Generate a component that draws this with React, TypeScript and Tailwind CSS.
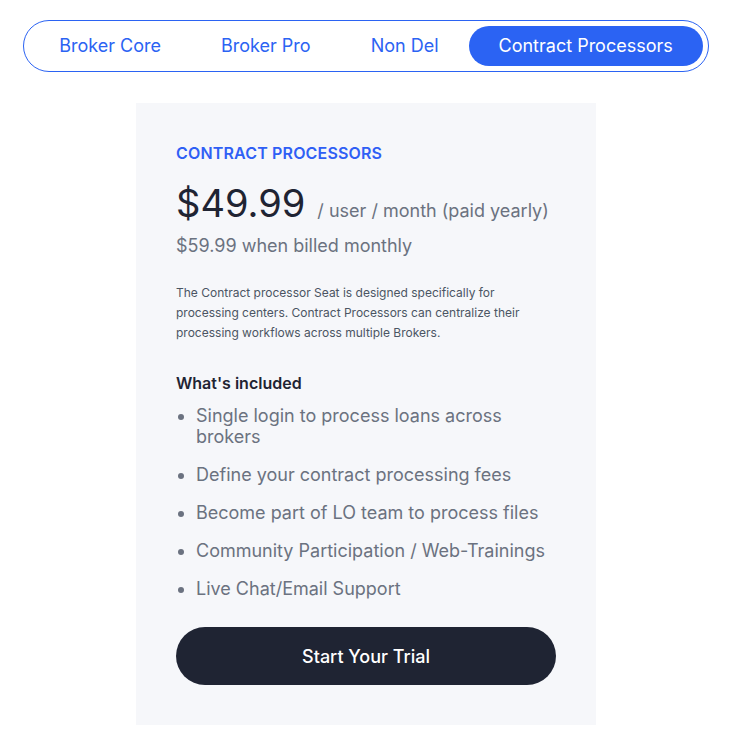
import { useState } from "react";

const tabs = ["Broker Core", "Broker Pro", "Non Del", "Contract Processors"];

const features = [
  "Single login to process loans across brokers",
  "Define your contract processing fees",
  "Become part of LO team to process files",
  "Community Participation / Web-Trainings",
  "Live Chat/Email Support",
];

export default function App() {
  const [active, setActive] = useState("Contract Processors");

  return (
    <div className="min-h-screen bg-white pr-[5px] pt-5 flex flex-col items-center font-['Inter',sans-serif]">
      {/* Plan tabs */}
      <div className="flex rounded-full border border-[#2b63f3] p-[5px]">
        {tabs.map((t) => (
          <button
            key={t}
            onClick={() => setActive(t)}
            className={
              active === t
                ? "h-10 px-[30px] rounded-full bg-[#2b63f3] text-white text-[18px] leading-none"
                : "h-10 px-[30px] rounded-full text-[#2b63f3] text-[18px] leading-none"
            }
          >
            {t}
          </button>
        ))}
      </div>

      {/* Card */}
      <div className="mt-[31px] w-[460px] bg-[#f6f7fa] px-10 pt-[38px] pb-10">
        <p className="text-[16px] leading-6 font-semibold text-[#2f5ff5] tracking-[0.01em]">CONTRACT PROCESSORS</p>
        <div className="mt-[16px] flex items-baseline gap-3">
          <span className="text-[38px] leading-[44px] text-[#1f2433]">$49.99</span>
          <span className="text-[18px] text-[#6b7280]">/ user / month (paid yearly)</span>
        </div>
        <p className="mt-[7px] text-[18px] leading-7 text-[#6b7280]">$59.99 when billed monthly</p>

        <p className="mt-[23px] text-[12px] leading-5 text-[#4b5563]">
          The Contract processor Seat is designed specifically for processing centers. Contract Processors can
          centralize their processing workflows across multiple Brokers.
        </p>

        <p className="mt-[28px] text-[16px] leading-6 font-semibold text-[#1f2433]">What's included</p>
        <ul className="mt-[10px] list-disc pl-5 space-y-[17px] text-[18px] leading-[21px] text-[#6b7280] marker:text-[#6b7280]">
          {features.map((f) => (
            <li key={f}>{f}</li>
          ))}
        </ul>

        <button className="mt-[28px] w-full h-[58px] rounded-full bg-[#1f2433] text-white text-[18px] font-medium">
          Start Your Trial
        </button>
      </div>
    </div>
  );
}
